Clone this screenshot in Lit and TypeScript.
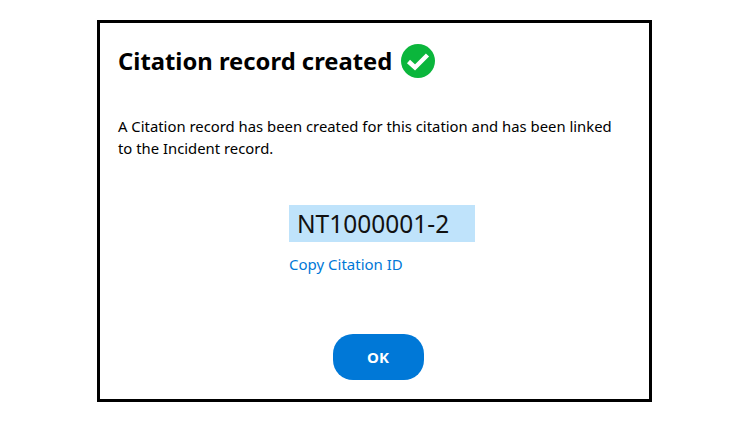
import { LitElement, html, css } from "lit";
import { customElement } from "lit/decorators.js";

@customElement("app-root")
export class AppRoot extends LitElement {
  static styles = css`
    :host { display: block; width: 750px; height: 422px; background: #fff; font-family: "Noto Sans", "Open Sans", sans-serif; color: #000; padding: 20px 0 0 97px; box-sizing: border-box; }
    .dialog { box-sizing: border-box; width: 555px; height: 382px; border: 3px solid #000; padding: 20px 18px 19px; display: flex; flex-direction: column; }
    .title { display: flex; align-items: center; gap: 9px; margin: 0; font-size: 23.8px; font-weight: 700; line-height: 36px; }
    .text { margin: 36px 0 0; max-width: 505px; font-size: 14.85px; line-height: 22px; }
    .mid { display: flex; flex-direction: column; align-items: flex-start; margin: 46px 0 0 171px; }
    .id { background: #bfe3fb; width: 186px; height: 37px; line-height: 37px; font-size: 24.5px; padding-left: 8px; box-sizing: border-box; color: #111; }
    .link { color: #0078d7; font-size: 15px; margin-top: 11px; line-height: 22px; }
    .foot { margin-top: auto; display: flex; justify-content: center; padding-left: 7px; }
    button { width: 91px; height: 46px; border: 0; border-radius: 20px; background: #0078d7; color: #fff; font: 700 15px "Noto Sans", sans-serif; }
    svg { flex: none; }
  `;
  render() {
    return html`<div class="dialog">
      <h1 class="title">Citation record created
        <svg width="34" height="34" viewBox="0 0 34 34"><circle cx="17" cy="17" r="17" fill="#0bb63c"/><path d="M7.5 17.5l6.5 6 12.5-12.5" fill="none" stroke="#fff" stroke-width="4.5"/></svg>
      </h1>
      <p class="text">A Citation record has been created for this citation and has been linked to the Incident record.</p>
      <div class="mid"><div class="id">NT1000001-2</div><span class="link">Copy Citation ID</span></div>
      <div class="foot"><button>OK</button></div>
    </div>`;
  }
}
